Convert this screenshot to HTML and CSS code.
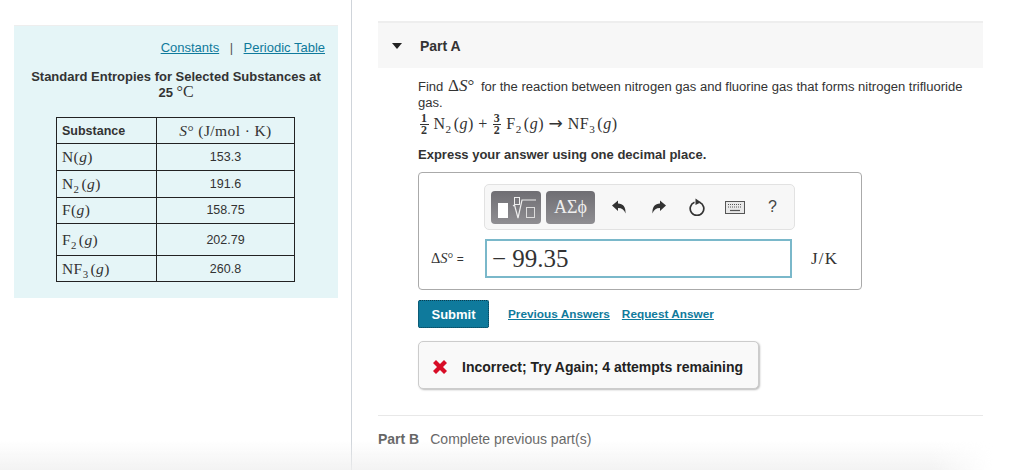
FILE: index.html
```html
<!DOCTYPE html>
<html lang="en">
<head>
  <meta charset="UTF-8">
  <title>Part A - Entropy</title>
  <link rel="stylesheet" href="styles.css">
</head>
<body>
  <div class="page">
    <!-- Left column with the data table -->
    <aside class="sidebar">
      <div class="info-panel">
        <div class="info-links">
          <a href="#">Constants</a>
          <span class="sep">|</span>
          <a href="#">Periodic Table</a>
        </div>
        <h3 class="info-title">Standard Entropies for Selected Substances at <span class="nowrap">25 <span class="math">°C</span></span></h3>
        <table class="data-table">
          <tr class="row-head">
            <th>Substance</th>
            <td class="math"><i>S</i>° (J/mol · K)</td>
          </tr>
          <tr class="row-first">
            <td class="math">N(<i>g</i>)</td>
            <td>153.3</td>
          </tr>
          <tr class="row-plain">
            <td class="math">N<sub>2</sub>(<i>g</i>)</td>
            <td>191.6</td>
          </tr>
          <tr class="row-plain row-soft">
            <td class="math">F(<i>g</i>)</td>
            <td>158.75</td>
          </tr>
          <tr class="row-tall row-soft">
            <td class="math">F<sub>2</sub>(<i>g</i>)</td>
            <td>202.79</td>
          </tr>
          <tr class="row-last row-soft">
            <td class="math">NF<sub>3</sub>(<i>g</i>)</td>
            <td>260.8</td>
          </tr>
        </table>
      </div>
    </aside>

    <!-- Right column with the question -->
    <main class="question">
      <div class="part-head">
        <span class="caret"></span>
        <span class="part-name">Part A</span>
      </div>

      <div class="part-body">
        <p class="prompt">Find <span class="math delta">Δ<i>S</i>°</span> for the reaction between nitrogen gas and fluorine gas that forms nitrogen trifluoride <span class="nowrap">gas.</span></p>
        <div class="equation math">
          <span class="frac"><span>1</span><span>2</span></span>
          <span>N<sub>2</sub>(<i>g</i>) +</span>
          <span class="frac"><span>3</span><span>2</span></span>
          <span>F<sub>2</sub>(<i>g</i>) <span class="arrow">→</span> NF<sub>3</sub>(<i>g</i>)</span>
        </div>
        <p class="instruction">Express your answer using one decimal place.</p>

        <div class="answer-box">
          <div class="toolbar">
            <span class="tool-btn tool-templates">
              <svg width="50" height="33" viewBox="0 0 50 33">
                <rect x="7" y="12" width="10" height="15" fill="#fff"/>
                <rect x="23.500" y="6.500" width="5" height="7" fill="none" stroke="#eee"/>
                <path d="M22 15l1.500-1 3.500 13 4-18h14" fill="none" stroke="#eee" stroke-width="1.200"/>
                <rect x="35.500" y="16.500" width="8" height="10" fill="none" stroke="#ddd"/>
              </svg>
            </span>
            <span class="tool-btn tool-symbols">ΑΣϕ</span>
            <svg class="tool-icon icon-undo" width="14" height="14" viewBox="0 0 14 14"><path d="M0 5.500L6 .5v3c5 0 8 3.500 7.500 10-1-3.500-3.500-5.500-7.500-5.500v3z" fill="#333"/></svg>
            <svg class="tool-icon icon-redo" width="14" height="14" viewBox="0 0 14 14"><path d="M14 5.500L8 .5v3c-5 0-8 3.500-7.500 10 1-3.500 3.500-5.500 7.500-5.500v3z" fill="#333"/></svg>
            <svg class="tool-icon icon-reset" width="16" height="18" viewBox="0 0 16 18"><path d="M10.500 4.300a6.800 6.800 0 1 1-5 0" fill="none" stroke="#333" stroke-width="1.700"/><path d="M6.500 .5l5.500 3.800-5.500 2.700z" fill="#333"/></svg>
            <svg class="tool-icon icon-keys" width="20" height="13" viewBox="0 0 20 13">
              <rect x="0.500" y="0.500" width="19" height="12" fill="#e8e8e8" stroke="#555"/>
              <path d="M3 3.500h14M3 6h14" stroke="#555" stroke-width="1.200" stroke-dasharray="1 1"/>
              <path d="M5 9.500h10" stroke="#555" stroke-width="1.200"/>
            </svg>
            <span class="tool-help">?</span>
          </div>
          <div class="answer-row">
            <span class="answer-label"><span class="math">Δ<i>S</i>°</span> =</span>
            <div class="answer-input math">− 99.35</div>
            <span class="answer-unit math">J/K</span>
          </div>
        </div>

        <div class="actions">
          <button class="submit-btn">Submit</button>
          <a href="#" class="action-link">Previous Answers</a>
          <a href="#" class="action-link">Request Answer</a>
        </div>

        <div class="feedback">
          <svg class="feedback-x" width="14" height="14" viewBox="0 0 14 14"><path d="M0 3L3 0 7 4 11 0 14 3 10 7 14 11 11 14 7 10 3 14 0 11 4 7z" fill="#d80d27"/></svg>
          <span>Incorrect; Try Again; 4 attempts remaining</span>
        </div>
      </div>

      <div class="part-next">
        <b>Part B</b>
        <span>Complete previous part(s)</span>
      </div>
    </main>
  </div>
  <div class="bottom-fade"></div>
</body>
</html>
```

FILE: styles.css
```css
html, body {
  margin: 0;
  height: 470px;
  overflow: hidden;
  background: #fff;
}
body {
  font-family: "Liberation Sans", Arial, sans-serif;
  font-size: 13px;
  color: #333;
}
p, h3 {
  margin: 0;
}
a {
  color: #0f7a9c;
}
.math {
  font-family: "Liberation Serif", "Times New Roman", serif;
}
.nowrap {
  white-space: nowrap;
}
sub {
  margin-right: 2px;
  font-size: 0.7em;
  line-height: 0;
}

.page {
  display: flex;
  height: 470px;
}
.sidebar {
  width: 352px;
  box-sizing: border-box;
  padding: 25px 13px 0 14px;
  border-right: 1px solid #cfd4da;
}
.info-panel {
  height: 273px;
  box-sizing: border-box;
  padding-top: 14px;
  background: #e5f5f7;
  border-top: 1px solid #eeeeee;
}
.info-links {
  display: flex;
  justify-content: flex-end;
  gap: 10.500px;
  padding-right: 13px;
  line-height: 16px;
}
.sep {
  color: #555;
}
.info-title {
  width: 300px;
  margin: 13px 0 0 12px;
  font-size: 13px;
  line-height: 16px;
  font-weight: bold;
  text-align: center;
}
.info-title .math {
  font-size: 16px;
  font-weight: normal;
  line-height: 0;
}
.data-table {
  width: 239px;
  margin: 16px 0 0 42px;
  border-collapse: collapse;
  table-layout: fixed;
  font-size: 12.500px;
}
.data-table th, .data-table td {
  padding: 0;
  border: 1px solid #222;
  text-align: center;
  font-weight: normal;
}
.data-table th {
  width: 100px;
  padding-left: 5px;
  box-sizing: border-box;
  text-align: left;
  font-weight: bold;
}
.data-table td.math {
  font-size: 15.500px;
  letter-spacing: 0.400px;
  color: #333;
}
.data-table td:first-child.math {
  padding-left: 5px;
  text-align: left;
}
.row-head { height: 26px; }
.row-first { height: 27px; }
.row-plain { height: 26.500px; }
.row-tall { height: 32px; }
.row-last { height: 26px; }
.row-soft td {
  border-top-color: #666;
}

.question {
  width: 605px;
  margin-left: 26px;
  padding-top: 21px;
}
.part-head {
  display: flex;
  align-items: center;
  height: 47px;
  border-top: 2px solid #eeeeee;
  background: #f7f7f7;
  box-sizing: border-box;
}
.caret {
  width: 0;
  height: 0;
  margin-left: 14px;
  border-left: 5.500px solid transparent;
  border-right: 5.500px solid transparent;
  border-top: 6px solid #222;
}
.part-name {
  margin-left: 18px;
  font-size: 14px;
  font-weight: bold;
}
.part-body {
  padding: 11px 10px 0 40px;
}
.prompt {
  font-size: 13.050px;
  line-height: 16px;
}
.delta {
  margin: 0 3px 0 1px;
  font-size: 17px;
  line-height: 0;
}
.equation {
  display: flex;
  align-items: center;
  gap: 5px;
  height: 24px;
  margin-top: 1px;
  padding-left: 2px;
  font-size: 16px;
  letter-spacing: 0.500px;
}
.arrow {
  font-family: "DejaVu Sans", sans-serif;
  font-size: 17px;
  line-height: 0;
}
.frac {
  display: inline-flex;
  flex-direction: column;
  align-items: center;
  font-size: 12px;
  line-height: 11px;
  font-weight: bold;
}
.frac span:first-child {
  border-bottom: 1px solid #333;
  padding: 0 1px;
}
.instruction {
  margin-top: 11px;
  line-height: 16px;
  font-weight: bold;
}
.answer-box {
  width: 444px;
  height: 118px;
  box-sizing: border-box;
  margin-top: 9px;
  padding-top: 11px;
  border: 1px solid #aaa;
  border-radius: 4px;
}
.toolbar {
  display: flex;
  align-items: center;
  width: 311px;
  height: 46px;
  box-sizing: border-box;
  margin-left: 65px;
  padding-left: 6px;
  border: 1px solid #e2e2e2;
  border-radius: 5px;
  background: #f7f7f7;
}
.tool-btn {
  display: flex;
  align-items: center;
  justify-content: center;
  height: 33px;
  box-sizing: border-box;
  border-radius: 4px;
  background: linear-gradient(#6f6e73, #8f8e92);
  color: #eee;
}
.tool-templates {
  width: 50px;
}
.tool-symbols {
  width: 49px;
  margin-left: 5px;
  font-family: "Liberation Serif", serif;
  font-size: 18px;
}
.tool-icon {
  flex: none;
}
.icon-undo { margin-left: 17px; }
.icon-redo { margin-left: 26px; }
.icon-reset { margin-left: 23px; }
.icon-keys { margin-left: 20px; }
.tool-help {
  margin-left: 23px;
  font-size: 16px;
  color: #444;
}
.answer-row {
  display: flex;
  align-items: center;
  margin-top: 9px;
}
.answer-label {
  width: 66px;
  box-sizing: border-box;
  padding-left: 12px;
  font-size: 12px;
}
.answer-label .math {
  font-size: 14.500px;
}
.answer-input {
  width: 307px;
  height: 39px;
  box-sizing: border-box;
  padding-left: 5px;
  border: 2px solid #7ab8ca;
  font-size: 25px;
  line-height: 35px;
  color: #333;
}
.answer-unit {
  margin-left: 19px;
  font-size: 17px;
  letter-spacing: 1.200px;
}
.actions {
  display: flex;
  align-items: center;
  margin-top: 10px;
}
.submit-btn {
  width: 71px;
  height: 28px;
  padding: 0;
  border: 1px solid #0f7a9c;
  border-radius: 2px;
  outline: 1px dotted #0a3d50;
  outline-offset: -1px;
  background: #0f7a9c;
  color: #fff;
  font-family: "Liberation Sans", Arial, sans-serif;
  font-size: 13px;
  font-weight: bold;
}
.action-link {
  margin-left: 12px;
  font-size: 11.800px;
  font-weight: bold;
}
.submit-btn + .action-link {
  margin-left: 19px;
}
.feedback {
  display: flex;
  align-items: center;
  gap: 15px;
  width: 341px;
  height: 48px;
  box-sizing: border-box;
  margin-top: 13px;
  padding: 4px 0 0 14px;
  border: 1px solid #ccc;
  border-radius: 5px;
  background: #f9f9f9;
  box-shadow: 1px 1px 2px #bbb;
  font-size: 14px;
  font-weight: bold;
  color: #222;
}
.part-next {
  display: flex;
  gap: 11px;
  margin-top: 26px;
  padding-top: 15px;
  border-top: 1px solid #e8e8e8;
  line-height: 17px;
  color: #666;
  font-size: 14px;
}
.bottom-fade {
  position: absolute;
  left: 0;
  right: 0;
  bottom: 0;
  height: 30px;
  background: linear-gradient(rgba(240, 240, 240, 0), rgba(240, 240, 240, 0.8));
  -webkit-mask-image: linear-gradient(to right, #000 91%, transparent 97%);
  mask-image: linear-gradient(to right, #000 91%, transparent 97%);
}
```
